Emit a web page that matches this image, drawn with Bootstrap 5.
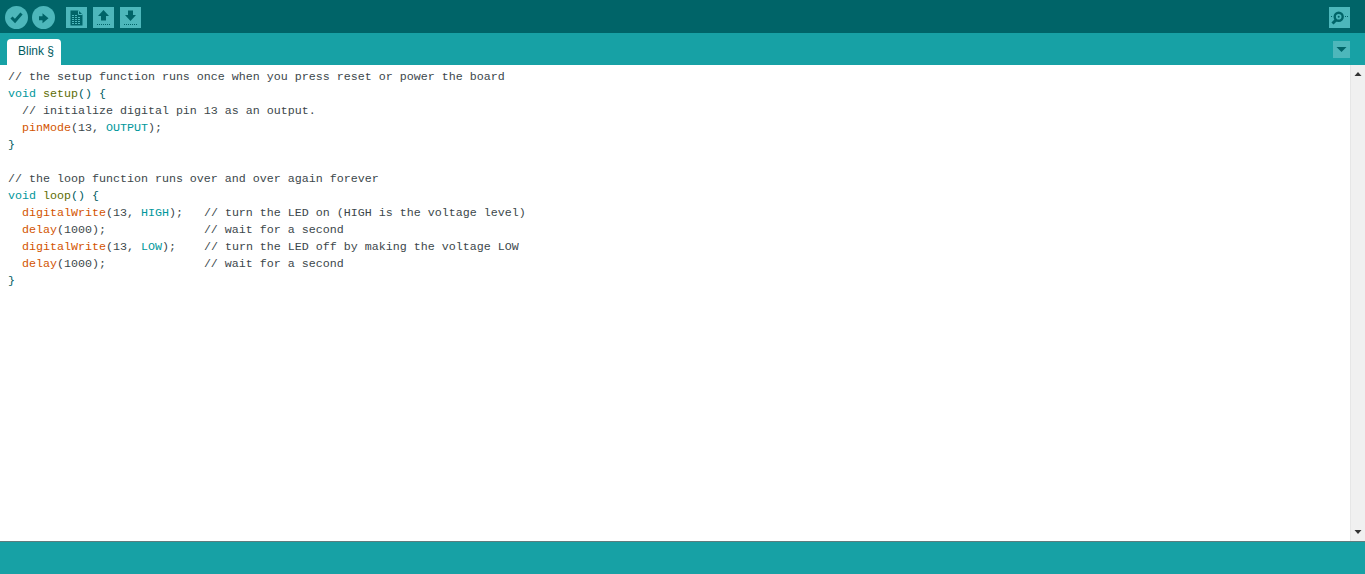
<!DOCTYPE html>
<html lang="en">
<head>
<meta charset="utf-8">
<title>Blink</title>
<link href="https://cdn.jsdelivr.net/npm/bootstrap@5.3.0/dist/css/bootstrap.min.css" rel="stylesheet">
<style>
html,body{height:100%;overflow:hidden;background:#fff}
.ide-top{height:33px;background:#006468;padding:2px 15px 0 5px}
.ide-tabs{height:32px;background:#17a1a5;padding:6px 15px 0 7px}
.ide-round{width:23px;height:23px;border-radius:50%;background:#4db7bb;padding:0;border:0;display:block}
.ide-sq{width:21px;height:21px;background:#4db7bb;padding:0;border:0;display:block}
.ide-sq svg,.ide-round svg{display:block}
.ide-gap{gap:4px}
.ide-gap2{gap:6px;margin-left:11px}
.ide-tab{width:54px;height:26px;background:#fff;color:#005c5f;border-radius:4px 4px 0 0;font:12px "Liberation Sans",Arial,sans-serif;padding:5px 0 0 11px;white-space:nowrap}
.ide-menu{width:17px;height:17px;background:#4db7bb;padding:0;border:0;margin-top:2px;display:block}
.ide-menu svg{display:block}
.ide-body{height:476px}
.ide-code{padding:4px 0 0 8px;font:11.67px/17px "Liberation Mono","Courier New",monospace;color:#3c474b;overflow:hidden}
.ide-line{height:17px;white-space:pre}
.ide-scroll{width:15px;background:#f0f0f0;border-left:1px solid #e6e6e6}
.ide-status{height:33px;background:#17a1a5;border-top:1px solid #5e7c7e}
.c-kw{color:#00979c}
.c-fn{color:#d35400}
.c-st{color:#5e6d03}
.c-br{color:#005c5f}
</style>
</head>
<body class="d-flex flex-column">
<div class="ide-top d-flex align-items-center justify-content-between">
  <div class="d-flex align-items-center">
    <div class="d-flex ide-gap">
      <button class="ide-round" aria-label="Verify"><svg width="23" height="23" viewBox="0 0 23 23"><path d="M6.500 11.500l3.500 3.500 6.500-7.500" fill="none" stroke="#006468" stroke-width="3"/></svg></button>
      <button class="ide-round" aria-label="Upload"><svg width="23" height="23" viewBox="0 0 23 23"><path d="M7 10.300h3.500V7.300l6 5-6 5v-3H7z" fill="#006468"/></svg></button>
    </div>
    <div class="d-flex ide-gap2">
      <button class="ide-sq" aria-label="New"><svg width="21" height="21" viewBox="0 0 21 21"><path d="M4.500 3.500h8l4 4v11h-12z" fill="#006468"/><path d="M12.500 3.500v4h4" fill="none" stroke="#4db7bb"/><path d="M6 8.500h5M6 10.500h9M6 12.500h9M6 14.500h9M6 16.500h9" stroke="#4db7bb" stroke-dasharray="2 1"/></svg></button>
      <button class="ide-sq" aria-label="Open"><svg width="21" height="21" viewBox="0 0 21 21"><path d="M10.500 3l5.500 6h-3v4.500H8V9H5z" fill="#006468"/><path d="M4 17.500h13" stroke="#006468" stroke-dasharray="1 1"/></svg></button>
      <button class="ide-sq" aria-label="Save"><svg width="21" height="21" viewBox="0 0 21 21"><path d="M10.500 14l5.500-6h-3V3.500H8V8H5z" fill="#006468"/><path d="M4 17.500h13" stroke="#006468" stroke-dasharray="1 1"/></svg></button>
    </div>
  </div>
  <button class="ide-sq" aria-label="Serial monitor"><svg width="21" height="21" viewBox="0 0 21 21"><circle cx="9.700" cy="9.700" r="4" fill="none" stroke="#006468" stroke-width="2.400"/><circle cx="9.700" cy="9.700" r="1" fill="#006468"/><path d="M7 13l-3.500 3.500" stroke="#006468" stroke-width="3"/><path d="M2 9.500h2M16 9.500h3" stroke="#006468" stroke-dasharray="1 1"/></svg></button>
</div>
<div class="ide-tabs d-flex justify-content-between">
  <div class="ide-tab">Blink §</div>
  <button class="ide-menu" aria-label="Tabs menu"><svg width="17" height="17" viewBox="0 0 17 17"><path d="M3.500 6h10l-5 5z" fill="#006468"/></svg></button>
</div>
<div class="ide-body d-flex">
  <div class="ide-code flex-grow-1">
    <div class="ide-line">// the setup function runs once when you press reset or power the board</div>
    <div class="ide-line"><span class="c-kw">void</span> <span class="c-st">setup</span><span class="c-br">()</span> <span class="c-br">{</span></div>
    <div class="ide-line">  // initialize digital pin 13 as an output.</div>
    <div class="ide-line">  <span class="c-fn">pinMode</span>(13, <span class="c-kw">OUTPUT</span>);</div>
    <div class="ide-line"><span class="c-br">}</span></div>
    <div class="ide-line"></div>
    <div class="ide-line">// the loop function runs over and over again forever</div>
    <div class="ide-line"><span class="c-kw">void</span> <span class="c-st">loop</span><span class="c-br">()</span> <span class="c-br">{</span></div>
    <div class="ide-line">  <span class="c-fn">digitalWrite</span>(13, <span class="c-kw">HIGH</span>);   // turn the LED on (HIGH is the voltage level)</div>
    <div class="ide-line">  <span class="c-fn">delay</span>(1000);              // wait for a second</div>
    <div class="ide-line">  <span class="c-fn">digitalWrite</span>(13, <span class="c-kw">LOW</span>);    // turn the LED off by making the voltage LOW</div>
    <div class="ide-line">  <span class="c-fn">delay</span>(1000);              // wait for a second</div>
    <div class="ide-line"><span class="c-br">}</span></div>
  </div>
  <div class="ide-scroll d-flex flex-column justify-content-between flex-shrink-0">
    <svg width="14" height="17" viewBox="0 0 14 17"><path d="M3.500 11l3.500-4 3.500 4z" fill="#333"/></svg>
    <svg width="14" height="17" viewBox="0 0 14 17"><path d="M3.500 6l3.500 4 3.500-4z" fill="#333"/></svg>
  </div>
</div>
<div class="ide-status"></div>
<script src="https://cdn.jsdelivr.net/npm/bootstrap@5.3.0/dist/js/bootstrap.bundle.min.js"></script>
</body>
</html>
